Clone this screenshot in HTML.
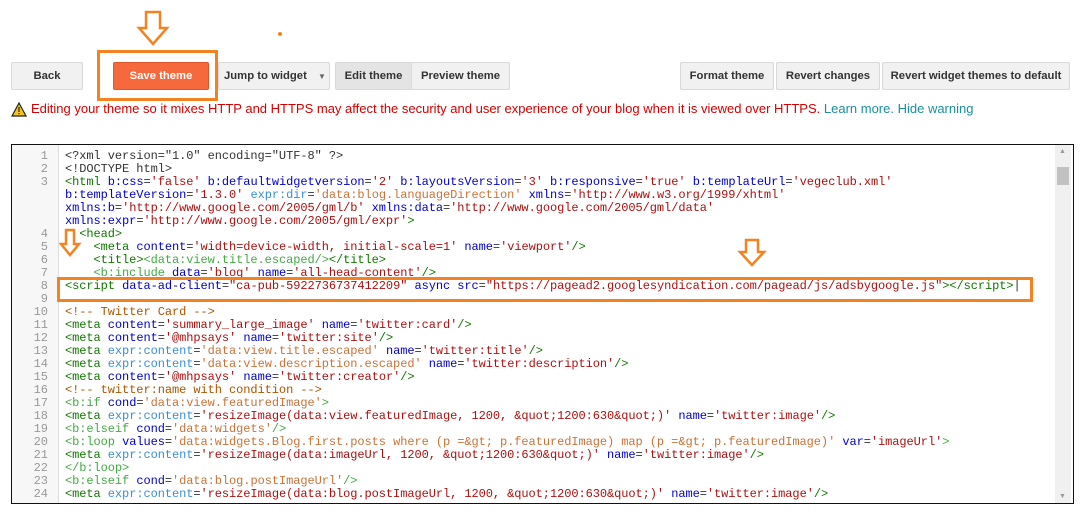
<!DOCTYPE html>
<html><head><style>
body{margin:0;width:1089px;height:513px;background:#fff;font-family:"Liberation Sans",sans-serif;position:relative;overflow:hidden}
.b{position:absolute;top:62px;height:28px;box-sizing:border-box;border:1px solid #d9d9d9;background:#f1f1f1;border-radius:2px;font-size:11.3px;font-weight:bold;color:#333;line-height:26px;text-align:center;white-space:nowrap}
.warn{position:absolute;left:11px;top:101px;font-size:13px;color:#d20000}
.warn a{color:#1a8f9d}
.ed{position:absolute;left:11px;top:144px;width:1063px;height:360px;box-sizing:border-box;border:1px solid #111;overflow:hidden}
.gut{position:absolute;left:0;top:0;width:46px;height:100%;background:#f7f7f7;border-right:1px solid #ddd}
pre{margin:0;font-family:"Liberation Mono",monospace;font-size:12px;line-height:13px}
.ln{position:absolute;left:0;top:5px;width:36px;text-align:right;color:#999}
.code{position:absolute;left:53px;top:5px;color:#333;letter-spacing:-0.07px}
.t{color:#170}.a{color:#00c}.s{color:#a11}.e{color:#3a8fd8}.d{color:#c8733a}.c{color:#a50}
.sb{position:absolute;right:2px;top:0;width:16px;height:100%;background:#f0f0f0}
.o{position:absolute;border:3px solid #f58220;box-sizing:border-box}
</style></head><body>
<svg style="position:absolute;left:0;top:0" width="1089" height="300">
<path d="M146 12h14v16h7l-14 16-14-16h7z" fill="none" stroke="#f58220" stroke-width="2.5"/>
<circle cx="280" cy="34" r="2" fill="#f58220"/>
<path d="M66 230h8v14h5l-9 11-9-11h5z" fill="none" stroke="#f58220" stroke-width="2.5"/>
<path d="M746 240h12v12h6l-12 13-12-13h6z" fill="none" stroke="#f58220" stroke-width="2.5"/>
<path d="M19 103l7 13h-14z" fill="#f5c518" stroke="#222" stroke-width="1.2"/>
<rect x="18.4" y="107" width="1.2" height="5" fill="#222"/><rect x="18.4" y="113" width="1.2" height="1.2" fill="#222"/>
</svg>
<div class="o" style="left:97px;top:50px;width:121px;height:51px"></div>
<div class="b" style="left:11px;width:72px">Back</div>
<div class="b" style="left:113px;width:96px;background:#f6693c;border-color:#e0552a;color:#fff">Save theme</div>
<div class="b" style="left:218px;width:112px;text-align:left;padding-left:5px">Jump to widget <span style="font-size:8px;color:#666;margin-left:8px">▼</span></div>
<div class="b" style="left:335px;width:77px;background:#e4e4e4">Edit theme</div>
<div class="b" style="left:411px;width:99px">Preview theme</div>
<div class="b" style="left:680px;width:94px">Format theme</div>
<div class="b" style="left:776px;width:104px">Revert changes</div>
<div class="b" style="left:882px;width:188px">Revert widget themes to default</div>
<div class="warn"><span style="display:inline-block;width:20px"></span>Editing your theme so it mixes HTTP and HTTPS may affect the security and user experience of your blog when it is viewed over HTTPS. <a>Learn more.</a> <a>Hide warning</a></div>
<div class="ed"><div class="gut"></div>
<pre class="ln">1
2
3



4
5
6
7
8
9
10
11
12
13
14
15
16
17
18
19
20
21
22
23
24</pre>
<pre class="code">&lt;?xml version="1.0" encoding="UTF-8" ?&gt;
&lt;!DOCTYPE html&gt;
<span class="t">&lt;html</span> <span class="a">b:css</span>=<span class="s">'false'</span> <span class="a">b:defaultwidgetversion</span>=<span class="s">'2'</span> <span class="a">b:layoutsVersion</span>=<span class="s">'3'</span> <span class="a">b:responsive</span>=<span class="s">'true'</span> <span class="a">b:templateUrl</span>=<span class="s">'vegeclub.xml'</span>
<span class="a">b:templateVersion</span>=<span class="s">'1.3.0'</span> <span class="e">expr:dir</span>=<span class="d">'data:blog.languageDirection'</span> <span class="a">xmlns</span>=<span class="s">'http://www.w3.org/1999/xhtml'</span>
<span class="a">xmlns:b</span>=<span class="s">'http://www.google.com/2005/gml/b'</span> <span class="a">xmlns:data</span>=<span class="s">'http://www.google.com/2005/gml/data'</span>
<span class="a">xmlns:expr</span>=<span class="s">'http://www.google.com/2005/gml/expr'</span><span class="t">&gt;</span>
  <span class="t">&lt;head&gt;</span>
    <span class="t">&lt;meta</span> <span class="a">content</span>=<span class="s">'width=device-width, initial-scale=1'</span> <span class="a">name</span>=<span class="s">'viewport'</span><span class="t">/&gt;</span>
    <span class="t">&lt;title&gt;</span><span class="t" style="color:#4a4">&lt;data:view.title.escaped/&gt;</span><span class="t">&lt;/title&gt;</span>
    <span class="t" style="color:#4a4">&lt;b:include</span> <span class="a">data</span>=<span class="s">'blog'</span> <span class="a">name</span>=<span class="s">'all-head-content'</span><span class="t">/&gt;</span>
<span class="t">&lt;script</span> <span class="a">data-ad-client</span>=<span class="s">"ca-pub-5922736737412209"</span> <span class="a">async</span> <span class="a">src</span>=<span class="s">"https://pagead2.googlesyndication.com/pagead/js/adsbygoogle.js"</span><span class="t">&gt;&lt;/script&gt;</span>|

<span class="c">&lt;!-- Twitter Card --&gt;</span>
<span class="t">&lt;meta</span> <span class="a">content</span>=<span class="s">'summary_large_image'</span> <span class="a">name</span>=<span class="s">'twitter:card'</span><span class="t">/&gt;</span>
<span class="t">&lt;meta</span> <span class="a">content</span>=<span class="s">'@mhpsays'</span> <span class="a">name</span>=<span class="s">'twitter:site'</span><span class="t">/&gt;</span>
<span class="t">&lt;meta</span> <span class="e">expr:content</span>=<span class="d">'data:view.title.escaped'</span> <span class="a">name</span>=<span class="s">'twitter:title'</span><span class="t">/&gt;</span>
<span class="t">&lt;meta</span> <span class="e">expr:content</span>=<span class="d">'data:view.description.escaped'</span> <span class="a">name</span>=<span class="s">'twitter:description'</span><span class="t">/&gt;</span>
<span class="t">&lt;meta</span> <span class="a">content</span>=<span class="s">'@mhpsays'</span> <span class="a">name</span>=<span class="s">'twitter:creator'</span><span class="t">/&gt;</span>
<span class="c">&lt;!-- twitter:name with condition --&gt;</span>
<span class="t" style="color:#4a4">&lt;b:if</span> <span class="a">cond</span>=<span class="d">'data:view.featuredImage'</span><span class="t" style="color:#4a4">&gt;</span>
<span class="t">&lt;meta</span> <span class="e">expr:content</span>=<span class="s">'resizeImage(data:view.featuredImage, 1200, &amp;quot;1200:630&amp;quot;)'</span> <span class="a">name</span>=<span class="s">'twitter:image'</span><span class="t">/&gt;</span>
<span class="t" style="color:#4a4">&lt;b:elseif</span> <span class="a">cond</span>=<span class="d">'data:widgets'</span><span class="t" style="color:#4a4">/&gt;</span>
<span class="t" style="color:#4a4">&lt;b:loop</span> <span class="a">values</span>=<span class="d">'data:widgets.Blog.first.posts where (p =&amp;gt; p.featuredImage) map (p =&amp;gt; p.featuredImage)'</span> <span class="a">var</span>=<span class="s">'imageUrl'</span><span class="t" style="color:#4a4">&gt;</span>
<span class="t">&lt;meta</span> <span class="e">expr:content</span>=<span class="s">'resizeImage(data:imageUrl, 1200, &amp;quot;1200:630&amp;quot;)'</span> <span class="a">name</span>=<span class="s">'twitter:image'</span><span class="t">/&gt;</span>
<span class="t" style="color:#4a4">&lt;/b:loop&gt;</span>
<span class="t" style="color:#4a4">&lt;b:elseif</span> <span class="a">cond</span>=<span class="d">'data:blog.postImageUrl'</span><span class="t" style="color:#4a4">/&gt;</span>
<span class="t">&lt;meta</span> <span class="e">expr:content</span>=<span class="s">'resizeImage(data:blog.postImageUrl, 1200, &amp;quot;1200:630&amp;quot;)'</span> <span class="a">name</span>=<span class="s">'twitter:image'</span><span class="t">/&gt;</span></pre>
<div class="sb"><div style="position:absolute;top:3px;left:4px;font-size:7px;color:#999">▲</div><div style="position:absolute;top:22px;left:2px;width:12px;height:18px;background:#c1c1c1"></div><div style="position:absolute;bottom:3px;left:4px;font-size:7px;color:#999">▼</div></div>
</div>
<div class="o" style="left:57px;top:277px;width:976px;height:25px"></div>
</body></html>
